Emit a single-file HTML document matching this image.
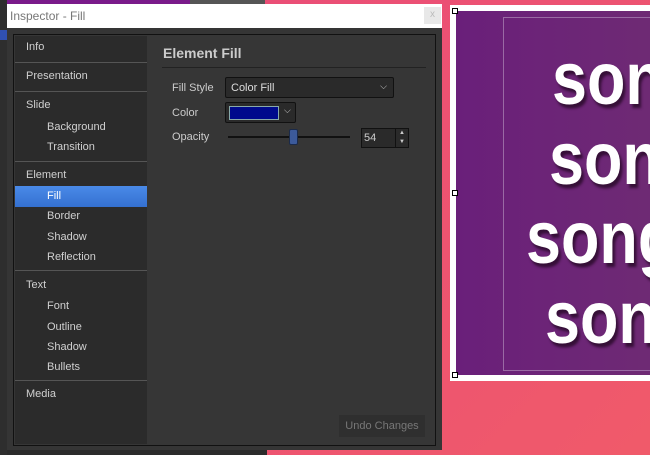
<!DOCTYPE html><html><head><style>
*{margin:0;padding:0;box-sizing:border-box}
body{width:650px;height:455px;overflow:hidden;position:relative;background:linear-gradient(135deg,#e84a7a,#f05a6a);font-family:"Liberation Sans",sans-serif;font-size:11px}
.a{position:absolute}
.sb div.t{position:absolute;color:#d0d0d0;font-size:11px}
.sep{position:absolute;left:0;width:132px;height:1px;background:#555}
.song{position:absolute;font-family:"Liberation Sans",sans-serif;font-weight:bold;font-size:74px;color:#fff;text-shadow:3px 4px 3px rgba(40,10,40,.8);white-space:nowrap;line-height:1;transform:scaleX(.85);transform-origin:0 0}
</style></head><body>
<div class="a" style="left:0;top:0;width:200px;height:5px;background:#7a1a8a"></div>
<div class="a" style="left:190px;top:0;width:75px;height:5px;background:#555"></div>
<div class="a" style="left:0;top:0;width:7px;height:455px;background:#2e2e2e"></div>
<div class="a" style="left:0;top:30px;width:7px;height:10px;background:#3050b0"></div>
<div class="a" style="left:7px;top:448px;width:260px;height:7px;background:#2b2b2b"></div>
<div class="a" style="left:450px;top:5px;width:200px;height:376px;background:#fff"></div>
<div class="a" style="left:456px;top:11px;width:194px;height:364px;background:linear-gradient(90deg,#6a1f7a,#6e2a74)"></div>
<div class="a" style="left:503px;top:17px;width:147px;height:354px;border:1px solid #9a6aa4;border-right:none"></div>
<div class="a" style="left:452px;top:8px;width:6px;height:6px;border:1px solid #000;background:#fff"></div>
<div class="a" style="left:452px;top:190px;width:6px;height:6px;border:1px solid #000;background:#fff"></div>
<div class="a" style="left:452px;top:372px;width:6px;height:6px;border:1px solid #000;background:#fff"></div>
<div class="song" style="left:552px;top:42px">song</div>
<div class="song" style="left:549px;top:122px">song</div>
<div class="song" style="left:526px;top:201px">song</div>
<div class="song" style="left:545px;top:281px">song</div>
<div class="a" style="left:7px;top:4px;width:435px;height:24px;background:#fff"></div>
<div class="a" style="left:10px;top:9px;color:#777;font-size:12px">Inspector - Fill</div>
<div class="a" style="left:424px;top:7px;width:17px;height:17px;background:#e8e8e8;color:#bbb;font-size:10px;text-align:center;line-height:16px">x</div>
<div class="a" style="left:7px;top:28px;width:435px;height:422px;background:#353535"></div>
<div class="a" style="left:13px;top:34px;width:423px;height:412px;border:1px solid #111;background:#363636"></div>
<div class="a sb" style="left:15px;top:36px;width:132px;height:408px;background:#2b2b2b">
<div class="sep" style="top:26px"></div><div class="sep" style="top:55px"></div><div class="sep" style="top:125px"></div><div class="sep" style="top:234px"></div><div class="sep" style="top:344px"></div>
<div class="a" style="left:0;top:150px;width:132px;height:21px;background:linear-gradient(#4a8ae8,#3470d0)"></div>
<div class="t" style="left:11px;top:5px">Info</div>
<div class="t" style="left:11px;top:34px">Presentation</div>
<div class="t" style="left:11px;top:63px">Slide</div>
<div class="t" style="left:32px;top:85px">Background</div>
<div class="t" style="left:32px;top:105px">Transition</div>
<div class="t" style="left:11px;top:133px">Element</div>
<div class="t" style="left:32px;top:154px;color:#fff">Fill</div>
<div class="t" style="left:32px;top:174px">Border</div>
<div class="t" style="left:32px;top:195px">Shadow</div>
<div class="t" style="left:32px;top:215px">Reflection</div>
<div class="t" style="left:11px;top:243px">Text</div>
<div class="t" style="left:32px;top:264px">Font</div>
<div class="t" style="left:32px;top:285px">Outline</div>
<div class="t" style="left:32px;top:305px">Shadow</div>
<div class="t" style="left:32px;top:325px">Bullets</div>
<div class="t" style="left:11px;top:352px">Media</div>
</div>
<div class="a" style="left:163px;top:45px;color:#ccc;font-size:14px;font-weight:bold">Element Fill</div>
<div class="a" style="left:162px;top:67px;width:264px;height:1px;background:#222"></div>
<div class="a" style="left:172px;top:82px;color:#ccc">Fill Style</div>
<div class="a" style="left:225px;top:77px;width:169px;height:21px;background:#2a2a2a;border:1px solid #111;border-radius:2px;color:#ddd;padding:4px 5px">Color Fill<span style="position:absolute;right:6px;top:3px;font-size:9px;color:#ccc">⌵</span></div>
<div class="a" style="left:172px;top:107px;color:#ccc">Color</div>
<div class="a" style="left:225px;top:102px;width:71px;height:21px;background:#2a2a2a;border:1px solid #111;border-radius:2px"><div class="a" style="left:3px;top:3px;width:50px;height:14px;background:#000a8c;border:1px solid #8aa"></div><span class="a" style="left:58px;top:2px;font-size:9px;color:#ccc">⌵</span></div>
<div class="a" style="left:172px;top:131px;color:#ccc">Opacity</div>
<div class="a" style="left:228px;top:136px;width:122px;height:2px;background:#111"></div>
<div class="a" style="left:289px;top:129px;width:9px;height:16px;background:#3c5a9a;border:1px solid #1a2a4a;border-radius:2px"></div>
<div class="a" style="left:361px;top:128px;width:48px;height:20px;background:#2a2a2a;border:1px solid #111;color:#ccc;padding:3px 2px">54<div class="a" style="left:33px;top:0;width:13px;height:18px;border-left:1px solid #111;font-size:6px;color:#ccc;line-height:9px;text-align:center">▲<br>▼</div></div>
<div class="a" style="left:339px;top:415px;width:86px;height:22px;background:#2f2f2f;color:#777;text-align:center;line-height:22px">Undo Changes</div>
</body></html>
